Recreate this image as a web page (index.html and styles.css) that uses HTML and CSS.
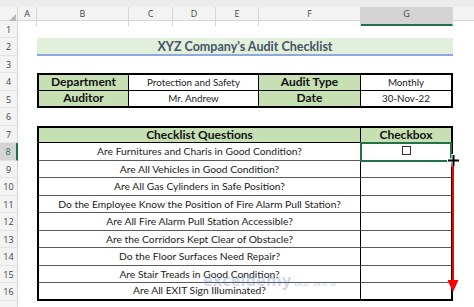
FILE: index.html
```html
<!DOCTYPE html>
<html lang="en">
<head>
    <meta charset="UTF-8">
    <title>XYZ Company's Audit Checklist</title>
    <link rel="stylesheet" href="styles.css">
</head>
<body>
<div class="page">
    <div class="topbar"></div>

    <div class="colheads">
        <div class="corner">
            <svg width="18" height="13" viewBox="0 0 18 13"><polygon points="16,4 16,11 9,11" fill="#b8b8b8"/></svg>
        </div>
        <div class="ch ch-a">A</div>
        <div class="ch ch-b">B</div>
        <div class="ch ch-c">C</div>
        <div class="ch ch-d">D</div>
        <div class="ch ch-e">E</div>
        <div class="ch ch-f">F</div>
        <div class="ch ch-g active">G</div>
        <div class="ch ch-h"></div>
    </div>

    <div class="body">
        <div class="rowheads">
            <div class="rh">1</div>
            <div class="rh">2</div>
            <div class="rh">3</div>
            <div class="rh">4</div>
            <div class="rh">5</div>
            <div class="rh">6</div>
            <div class="rh">7</div>
            <div class="rh active">8</div>
            <div class="rh">9</div>
            <div class="rh">10</div>
            <div class="rh">11</div>
            <div class="rh">12</div>
            <div class="rh">13</div>
            <div class="rh">14</div>
            <div class="rh">15</div>
            <div class="rh">16</div>
            <div class="rh"></div>
        </div>

        <div class="cells">
            <div class="title">XYZ Company's Audit Checklist</div>

            <div class="info">
                <div class="lbl">Department</div>
                <div class="val">Protection and Safety</div>
                <div class="lbl">Audit Type</div>
                <div class="val last">Monthly</div>
                <div class="lbl bottom">Auditor</div>
                <div class="val bottom">Mr. Andrew</div>
                <div class="lbl bottom">Date</div>
                <div class="val bottom last">30-Nov-22</div>
            </div>

            <div class="checklist">
                <div class="head q">Checklist Questions</div>
                <div class="head box">Checkbox</div>

                <div class="q">Are Furnitures and Charis in Good Condition?</div>
                <div class="box sel"><span class="tick"></span></div>
                <div class="q">Are All Vehicles in Good Condition?</div>
                <div class="box"></div>
                <div class="q">Are All Gas Cylinders in Safe Position?</div>
                <div class="box"></div>
                <div class="q">Do the Employee Know the Position of Fire Alarm Pull Station?</div>
                <div class="box"></div>
                <div class="q">Are All Fire Alarm Pull Station Accessible?</div>
                <div class="box"></div>
                <div class="q">Are the Corridors Kept Clear of Obstacle?</div>
                <div class="box"></div>
                <div class="q">Do the Floor Surfaces Need Repair?</div>
                <div class="box"></div>
                <div class="q">Are Stair Treads in Good Condition?</div>
                <div class="box"></div>
                <div class="q end">Are All EXIT Sign Illuminated?</div>
                <div class="box end"></div>
            </div>
        </div>
    </div>

    <div class="watermark">exceldemy<span>EXCEL · DATA · BI</span></div>

    <svg class="cursor" width="13" height="13" viewBox="0 0 13 13">
        <path d="M4.5 0h4v4.5H13v4H8.5V13h-4V8.5H0v-4h4.5z" fill="#fff"/>
        <path d="M5.5 1h2v4.5H12v2H7.5V12h-2V7.5H1v-2h4.5z" fill="#000"/>
    </svg>

    <svg class="arrow" width="14" height="130" viewBox="0 0 14 130">
        <line x1="7" y1="0" x2="7" y2="118" stroke="#ff0000" stroke-width="2"/>
        <polygon points="1.5,114 12.5,114 7,126" fill="#ff0000"/>
    </svg>
</div>
</body>
</html>
```

FILE: styles.css
```css
* { box-sizing: border-box; }
body { margin: 0; background: #fff; font-family: Lato, "Liberation Sans", sans-serif; }
.page { position: relative; width: 474px; height: 307px; overflow: hidden; }

.topbar { height: 7px; background: #ececec; }

/* column headers */
.colheads { display: grid; grid-template-columns: 18px 19px 92px 44px 43px 43px 102px 92px 1fr; height: 13.5px; background: #f3f3f3; border-bottom: 1px solid #d6d6d6; }
.corner { border-right: 1px solid #d6d6d6; }
.ch { font-family: "Open Sans", "Liberation Sans", sans-serif; font-size: 9px; color: #444; text-align: center; line-height: 13px; border-right: 1px solid #d6d6d6; }
.ch.active { background: #d4d4d4; border-bottom: 2px solid #217346; }
.ch-h { border-right: none; }

/* rows */
.body { display: flex; }
.rowheads { width: 18px; flex: none; background: #f3f3f3; border-right: 1px solid #d6d6d6; }
.rh { height: 17.5px; font-family: "Open Sans", "Liberation Sans", sans-serif; font-size: 9px; color: #444; text-align: center; line-height: 17px; border-bottom: 1px solid #e2e2e2; }
.rh.active { background: #d4d4d4; color: #217346; border-right: 2px solid #217346; margin-right: -1px; }

.cells { flex: 1; display: grid; grid-template-columns: 19px 92px 44px 43px 43px 102px 92px 1fr; grid-template-rows: repeat(17, 17.5px); }

.title { grid-column: 2 / 8; grid-row: 2; background: #e2efda; border-bottom: 2px solid #8ea9db; color: #44546a; font-weight: bold; font-size: 12.5px; text-align: center; line-height: 17px; }

/* info table */
.info { grid-column: 2 / 8; grid-row: 4 / 6; border: 2px solid #000; display: grid; grid-template-columns: 90px 130px 102px 1fr; grid-template-rows: 15.5px 15.5px; }
.info > div { border-right: 1px solid #000; border-bottom: 1px solid #000; text-align: center; font-size: 9.8px; line-height: 14px; color: #222; }
.info .lbl { background: #c6e0b4; font-weight: bold; font-size: 12px; color: #111; }
.info .last { border-right: none; }
.info .bottom { border-bottom: none; }

/* checklist table */
.checklist { grid-column: 2 / 8; grid-row: 7 / 17; border: 2px solid #000; display: grid; grid-template-columns: 322px 1fr; grid-template-rows: 15.5px repeat(8, 17.5px) 15.5px; }
.checklist > div { border-bottom: 1px solid #5a5a5a; text-align: center; font-size: 10.3px; line-height: 16px; color: #222; }
.checklist .q { border-right: 1px solid #000; }
.checklist .head { background: #c6e0b4; font-weight: bold; font-size: 12px; line-height: 14px; color: #111; border-bottom-color: #000; }
.checklist .end { border-bottom: none; line-height: 14px; }
.checklist .box { position: relative; }
.checklist .sel { outline: 2px solid #217346; outline-offset: -1px; }
.tick { display: inline-block; width: 9px; height: 9px; border: 1px solid #333; vertical-align: middle; margin-top: -3px; }

.watermark { position: absolute; left: 203px; top: 269px; font-family: "Open Sans", sans-serif; font-weight: bold; font-size: 16px; color: rgba(90, 130, 200, 0.33); letter-spacing: 0.3px; pointer-events: none; }
.watermark span { font-size: 5px; margin-left: 3px; letter-spacing: 0; }

.cursor { position: absolute; left: 447px; top: 154px; }
.arrow { position: absolute; left: 446px; top: 166px; }
```
